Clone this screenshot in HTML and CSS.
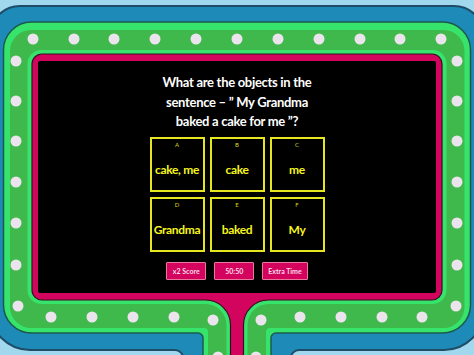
FILE: index.html
```html
<!DOCTYPE html>
<html lang="en">
<head>
    <meta charset="UTF-8">
    <title>Quiz Show</title>
    <link rel="stylesheet" href="styles.css">
</head>
<body>
    <div class="tv">
        <svg class="tv-frame" width="474" height="355" viewBox="0 0 474 355">
            <!-- outer blue band -->
            <path class="band-blue" d="M 20,6 H 454 A 30 30 0 0 1 484,36 V 310 A 40 40 0 0 1 444,350 H 299 A 8 8 0 0 0 291,358 V 362 H 183 V 358 A 8 8 0 0 0 175,350 H 30 A 40 40 0 0 1 -10,310 V 36 A 30 30 0 0 1 20,6 Z"/>
            <!-- light green rim -->
            <path class="band-light" d="M 31.5,22 H 442.5 A 28 28 0 0 1 470.5,50 V 305 A 28 28 0 0 1 442.5,333 H 276 A 5 5 0 0 0 271,338 V 362 H 203 V 338 A 5 5 0 0 0 198,333 H 31.5 A 28 28 0 0 1 3.5,305 V 50 A 28 28 0 0 1 31.5,22 Z"/>
            <!-- dotted green band -->
            <path class="band-mid" d="M 31,30 H 443.5 A 21 21 0 0 1 464.5,51 V 307 A 21 21 0 0 1 443.5,328 H 270 A 4 4 0 0 0 266,332 V 362 H 208 V 332 A 4 4 0 0 0 204,328 H 31 A 21 21 0 0 1 10,307 V 51 A 21 21 0 0 1 31,30 Z"/>
            <!-- inner bright strip -->
            <path class="band-light-inner" d="M 41.5,50 H 432.5 A 14 14 0 0 1 446.5,64 V 290 A 14 14 0 0 1 432.5,304 H 268.5 A 21 21 0 0 0 247.5,325 V 362 H 226.5 V 325 A 21 21 0 0 0 205.5,304 H 41.5 A 14 14 0 0 1 27.5,290 V 64 A 14 14 0 0 1 41.5,50 Z"/>
            <!-- pink bezel -->
            <path class="band-pink" d="M 42,54 H 432 A 10 10 0 0 1 442,64 V 290 A 10 10 0 0 1 432,300 H 268.5 A 25 25 0 0 0 243.5,325 V 362 H 230.5 V 325 A 25 25 0 0 0 205.5,300 H 42 A 10 10 0 0 1 32,290 V 64 A 10 10 0 0 1 42,54 Z"/>

            <g class="bulbs">
                <!-- top -->
                <circle cx="33" cy="39" r="5.5"/><circle cx="74" cy="39" r="5.5"/>
                <circle cx="114" cy="39" r="5.5"/><circle cx="155" cy="39" r="5.5"/>
                <circle cx="196" cy="39" r="5.5"/><circle cx="237" cy="39" r="5.5"/>
                <circle cx="278" cy="39" r="5.5"/><circle cx="319" cy="39" r="5.5"/>
                <circle cx="360" cy="39" r="5.5"/><circle cx="400" cy="39" r="5.5"/>
                <circle cx="441" cy="39" r="5.5"/>
                <!-- left -->
                <circle cx="16" cy="61" r="5.5"/><circle cx="16" cy="101" r="5.5"/>
                <circle cx="16" cy="141" r="5.5"/><circle cx="16" cy="182" r="5.5"/>
                <circle cx="16" cy="223" r="5.5"/><circle cx="16" cy="265" r="5.5"/>
                <circle cx="18" cy="306" r="5.5"/>
                <!-- right -->
                <circle cx="457" cy="61" r="5.5"/><circle cx="457" cy="101" r="5.5"/>
                <circle cx="457" cy="141" r="5.5"/><circle cx="457" cy="182" r="5.5"/>
                <circle cx="457" cy="223" r="5.5"/><circle cx="457" cy="265" r="5.5"/>
                <circle cx="456" cy="306" r="5.5"/>
                <!-- bottom -->
                <circle cx="51" cy="317" r="5.5"/><circle cx="92" cy="317" r="5.5"/>
                <circle cx="133" cy="317" r="5.5"/><circle cx="174" cy="317" r="5.5"/>
                <circle cx="213" cy="320" r="5.5"/><circle cx="261" cy="320" r="5.5"/>
                <circle cx="300" cy="317" r="5.5"/><circle cx="341" cy="317" r="5.5"/>
                <circle cx="382" cy="317" r="5.5"/><circle cx="422" cy="317" r="5.5"/>
                <!-- neck -->
                <circle cx="218" cy="357" r="5.5"/><circle cx="256" cy="357" r="5.5"/>
            </g>
        </svg>

        <div class="screen">
            <p class="question">What are the objects in the<br>sentence – ” My Grandma<br>baked a cake for me ”?</p>

            <div class="answers">
                <div class="answer"><span class="letter">A</span><span class="text">cake, me</span></div>
                <div class="answer"><span class="letter">B</span><span class="text">cake</span></div>
                <div class="answer"><span class="letter">C</span><span class="text">me</span></div>
                <div class="answer"><span class="letter">D</span><span class="text">Grandma</span></div>
                <div class="answer"><span class="letter">E</span><span class="text">baked</span></div>
                <div class="answer"><span class="letter">F</span><span class="text">My</span></div>
            </div>

            <div class="powerups">
                <button class="powerup">x2 Score</button>
                <button class="powerup">50:50</button>
                <button class="powerup">Extra Time</button>
            </div>
        </div>
    </div>
</body>
</html>
```

FILE: styles.css
```css
body {
    margin: 0;
    background-color: #a2d8ee;
    font-family: Lato, "Liberation Sans", sans-serif;
    overflow: hidden;
}
.tv {
    display: grid;
    width: 474px;
    height: 355px;
}
.tv > * {
    grid-area: 1 / 1;
}
.tv-frame {
    display: block;
}
.band-blue {
    fill: #1d8ab8;
    stroke: #1f4c66;
    stroke-width: 2;
}
.band-light, .band-light-inner {
    fill: #37e46b;
}
.band-light {
    stroke: #1c5a4e;
    stroke-width: 1.5;
}
.band-mid {
    fill: #3fb84c;
}
.band-pink {
    fill: #d3045e;
    stroke: #3a0c24;
    stroke-width: 1.2;
}
.bulbs circle {
    fill: #ebe4ec;
}
.screen {
    margin: 61px 38px 62px;
    padding-top: 12px;
    background: #000;
    border-radius: 2px;
    display: flex;
    flex-direction: column;
    align-items: center;
}
.question {
    margin: 0;
    color: #fff;
    font-size: 13px;
    font-weight: 700;
    letter-spacing: -0.3px;
    line-height: 19.5px;
    text-align: center;
}
.answers {
    display: grid;
    grid-template-columns: repeat(3, 55px);
    grid-auto-rows: 55px;
    gap: 5px;
    margin-top: 5.5px;
}
.answer {
    border: 2px solid #e6e61e;
    box-sizing: border-box;
    display: flex;
    flex-direction: column;
    align-items: center;
}
.letter {
    margin-top: 2px;
    color: #d8d81c;
    font-size: 6px;
    line-height: 8px;
}
.text {
    flex: 1;
    display: flex;
    align-items: center;
    color: #f6f61c;
    font-size: 12px;
    font-weight: 700;
    letter-spacing: -0.3px;
}
.powerups {
    display: flex;
    gap: 8px;
    margin-top: 10px;
}
.powerup {
    height: 18px;
    min-width: 40px;
    padding: 0 5px;
    background-color: #d4035d;
    border: 1px solid #e9789f;
    border-radius: 1px;
    color: #f7dce8;
    font-family: Lato, "Liberation Sans", sans-serif;
    font-size: 7px;
    font-weight: 700;
}
```
